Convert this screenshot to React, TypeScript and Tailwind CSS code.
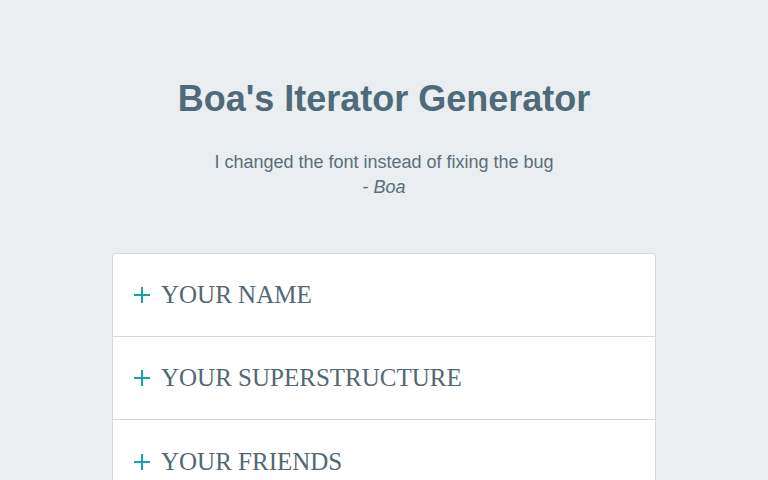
import React from 'react'

const rows = ['YOUR NAME', 'YOUR SUPERSTRUCTURE', 'YOUR FRIENDS']

function Plus() {
  return (
    <svg width="18" height="18" viewBox="0 0 18 18" className="shrink-0">
      <path d="M9 1v16M1 9h16" stroke="#1a9fae" strokeWidth="2" fill="none" />
    </svg>
  )
}

export default function App() {
  return (
    <div className="min-h-[480px] bg-[#eaeef1] font-['Liberation_Sans',sans-serif]">
      <div className="flex flex-col items-center pt-[77px]">
        <h1 className="text-[36px] leading-[44px] font-bold text-[#4f6a78]">Boa's Iterator Generator</h1>
        <div className="mt-[29px] text-center text-[18px] leading-[25px] text-[#5b6f79]">
          <p>I changed the font instead of fixing the bug</p>
          <p>
            - <em>Boa</em>
          </p>
        </div>
      </div>
      <div className="mx-auto mt-[53px] w-[544px] rounded-[4px] border border-[#d3dade] bg-white">
        {rows.map((r, i) => (
          <div
            key={r}
            className={`flex h-[83px] items-center gap-[10px] pl-[20px] ${i < rows.length - 1 ? 'border-b border-[#d3dade]' : ''}`}
          >
            <Plus />
            <span className="font-['Liberation_Serif',serif] text-[25px] text-[#526873]">{r}</span>
          </div>
        ))}
      </div>
    </div>
  )
}
